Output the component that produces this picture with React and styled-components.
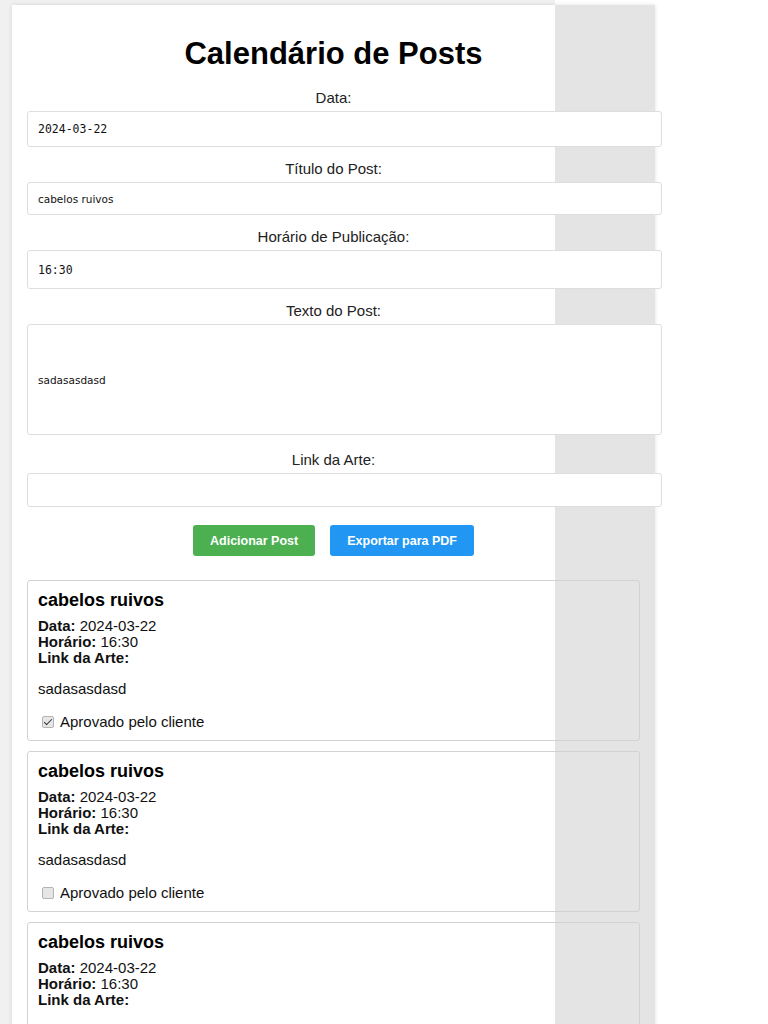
import React, { useState } from 'react';
import styled, { createGlobalStyle } from 'styled-components';

const GlobalStyle = createGlobalStyle`
  body {
    margin: 0;
    background: #ffffff;
    font-family: "Liberation Sans", Arial, sans-serif;
  }
`;

const Page = styled.div`
  width: 655px;
  min-height: 1024px;
  box-sizing: border-box;
  padding: 5px 0 0 12px;
  background: linear-gradient(to right, #f0f0f0 555px, #ffffff 555px);
`;

const Container = styled.div`
  min-height: 1019px;
  box-sizing: border-box;
  padding: 15px 15px 20px;
  background: linear-gradient(to right, #ffffff 543px, #e4e4e4 543px);
  box-shadow: 0 0 4px rgba(0, 0, 0, 0.12);
`;

const Title = styled.h1`
  margin: 16px 0 17px;
  font-size: 31px;
  line-height: 36px;
  font-weight: 700;
  color: #000;
  text-align: center;
`;

const Label = styled.label`
  display: block;
  margin-bottom: 5px;
  font-size: 15px;
  line-height: 17px;
  color: #222;
  text-align: center;
`;

const Field = styled.input`
  display: block;
  width: 100%;
  height: ${props => props.$h}px;
  box-sizing: content-box;
  padding: 0 10px;
  margin: 0 0 13px;
  border: 1px solid #dedede;
  border-radius: 3px;
  background: #fff;
  font-family: ${props => props.$mono ? '"DejaVu Sans Mono", monospace' : '"DejaVu Sans", sans-serif'};
  font-size: ${props => props.$mono ? '11.5px' : '10.5px'};
  color: #111;
  outline: none;
`;

const TextArea = styled.textarea`
  display: block;
  width: 100%;
  height: 50px;
  box-sizing: content-box;
  padding: 48px 10px 11px;
  margin: 0 0 16px;
  border: 1px solid #dedede;
  border-radius: 3px;
  background: #fff;
  font-family: "DejaVu Sans", sans-serif;
  font-size: 10.5px;
  line-height: 14px;
  color: #111;
  resize: none;
  outline: none;
`;

const Actions = styled.div`
  display: flex;
  justify-content: center;
  gap: 15px;
  margin: 18px 0 24px;
`;

const Button = styled.button`
  height: 31px;
  padding: 0 17px;
  border: none;
  border-radius: 3px;
  background: ${props => props.$color};
  color: #fff;
  font-family: "Liberation Sans", Arial, sans-serif;
  font-size: 12.5px;
  font-weight: 700;
  cursor: pointer;
`;

const Card = styled.div`
  box-sizing: border-box;
  margin-bottom: 10px;
  padding: 9px 10px 10px;
  border: 1px solid #d2d2d2;
  border-radius: 3px;
`;

const CardTitle = styled.h3`
  margin: 0 0 8px;
  font-size: 18px;
  line-height: 20px;
  font-weight: 700;
  color: #000;
`;

const Line = styled.div`
  font-size: 15px;
  line-height: 16px;
  color: #111;

  b {
    font-weight: 700;
  }
`;

const Body = styled.p`
  margin: 15px 0 17px;
  font-size: 15px;
  line-height: 16px;
  color: #111;
`;

const Check = styled.label`
  display: flex;
  align-items: center;
  font-size: 15px;
  line-height: 16px;
  color: #111;

  input {
    appearance: none;
    position: relative;
    width: 12px;
    height: 12px;
    margin: 0 6px 0 4px;
    border: 1px solid #b4b4b4;
    border-radius: 2px;
    background: #e6e6e6;
  }

  input:checked::after {
    content: '';
    position: absolute;
    left: 3px;
    top: 0px;
    width: 3px;
    height: 7px;
    border: solid #333;
    border-width: 0 1.5px 1.5px 0;
    transform: rotate(45deg);
  }
`;

const initialPosts = [
  { id: 1, title: 'cabelos ruivos', date: '2024-03-22', time: '16:30', text: 'sadasasdasd', approved: true },
  { id: 2, title: 'cabelos ruivos', date: '2024-03-22', time: '16:30', text: 'sadasasdasd', approved: false },
  { id: 3, title: 'cabelos ruivos', date: '2024-03-22', time: '16:30', text: 'sadasasdasd', approved: false },
];

function App() {
  const [posts, setPosts] = useState(initialPosts);

  const toggle = (id) => {
    setPosts(posts.map(p => p.id === id ? { ...p, approved: !p.approved } : p));
  };

  return (
    <>
      <GlobalStyle />
      <Page>
        <Container>
          <Title>Calendário de Posts</Title>

          <Label>Data:</Label>
          <Field $h={34} $mono type="text" defaultValue="2024-03-22" />

          <Label>Título do Post:</Label>
          <Field $h={31} type="text" defaultValue="cabelos ruivos" />

          <Label>Horário de Publicação:</Label>
          <Field $h={37} $mono type="text" defaultValue="16:30" />

          <Label>Texto do Post:</Label>
          <TextArea defaultValue="sadasasdasd" />

          <Label>Link da Arte:</Label>
          <Field $h={32} type="text" defaultValue="" />

          <Actions>
            <Button $color="#4caf50">Adicionar Post</Button>
            <Button $color="#2196f3">Exportar para PDF</Button>
          </Actions>

          {posts.map(post => (
            <Card key={post.id}>
              <CardTitle>{post.title}</CardTitle>
              <Line><b>Data:</b> {post.date}</Line>
              <Line><b>Horário:</b> {post.time}</Line>
              <Line><b>Link da Arte:</b></Line>
              <Body>{post.text}</Body>
              <Check>
                <input type="checkbox" checked={post.approved} onChange={() => toggle(post.id)} />
                Aprovado pelo cliente
              </Check>
            </Card>
          ))}
        </Container>
      </Page>
    </>
  );
}

export default App;
